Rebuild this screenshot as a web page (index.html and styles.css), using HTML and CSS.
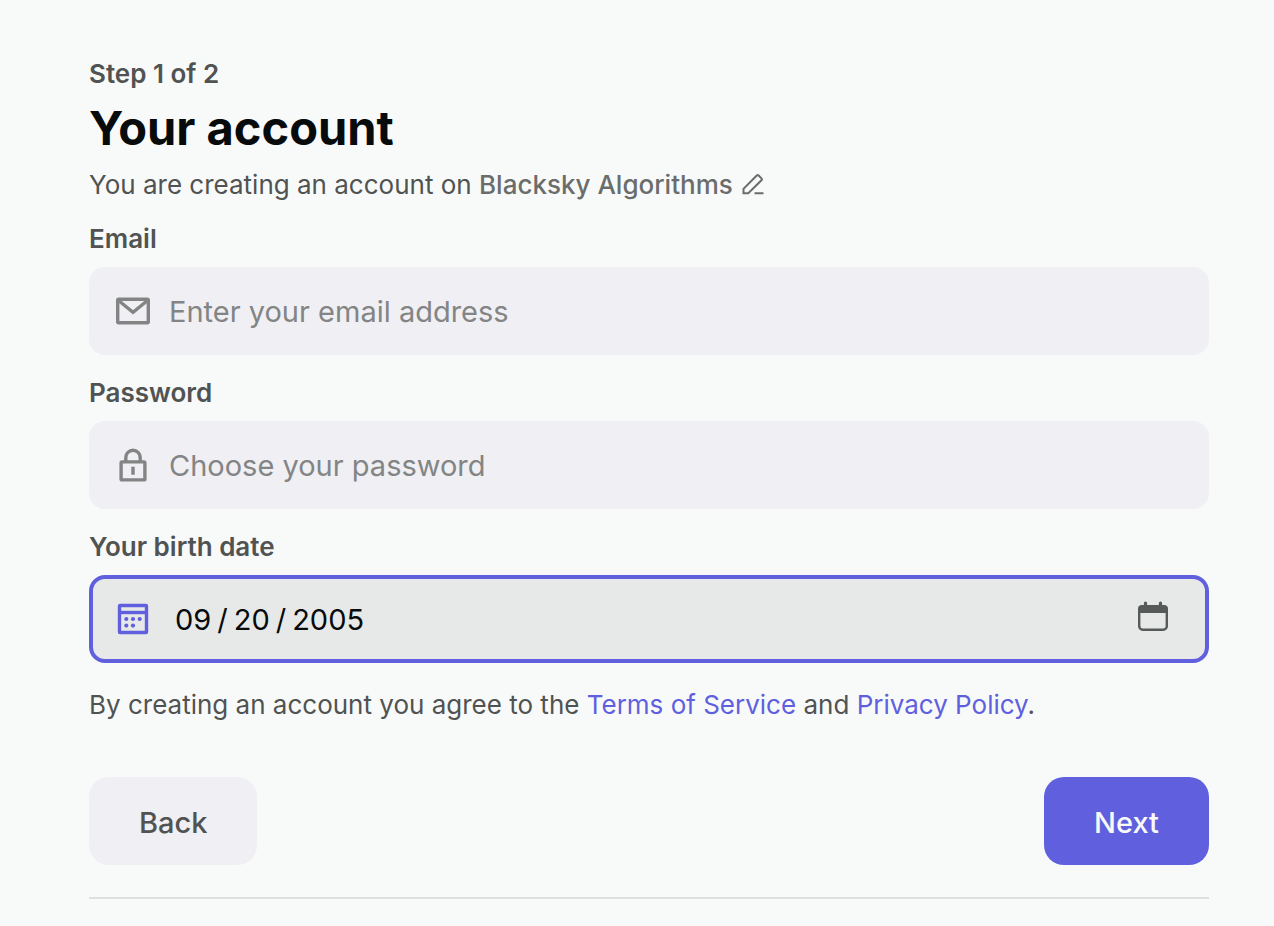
FILE: index.html
```html
<!DOCTYPE html>
<html lang="en">
<head>
    <meta charset="UTF-8">
    <meta name="viewport" content="width=device-width, initial-scale=1.0">
    <title>Your account</title>
    <link rel="stylesheet" href="styles.css">
</head>
<body>
    <main class="signup">
        <header class="signup-header">
            <p class="step">Step 1 of 2</p>
            <h1 class="title">Your account</h1>
            <p class="host">You are creating an account on
                <button type="button" class="host-button">Blacksky Algorithms<svg class="pencil" viewBox="0 0 24 24" aria-hidden="true"><path d="M2.500 20.200v-4.400L16 2.300a1 1 0 0 1 1.400 0l3.300 3.300a1 1 0 0 1 0 1.400L7.300 20.200zM13.500 20.200H22.500"/></svg></button>
            </p>
        </header>

        <form class="signup-form">
            <div class="field">
                <label class="field-label" for="email">Email</label>
                <div class="input-box">
                    <svg class="icon" viewBox="0 0 40 40" aria-hidden="true"><rect x="4.700" y="8.200" width="30.600" height="23.600" rx="1"/><path d="M5.500 9.500 20 21.200 34.500 9.500"/></svg>
                    <input type="email" id="email" placeholder="Enter your email address">
                </div>
            </div>

            <div class="field">
                <label class="field-label" for="password">Password</label>
                <div class="input-box">
                    <svg class="icon" viewBox="0 0 40 40" aria-hidden="true"><rect x="8.100" y="16.900" width="23.800" height="18" rx="1"/><path d="M12.800 16.500v-4a7.200 7.200 0 0 1 14.400 0v4M20 21.800v8"/></svg>
                    <input type="password" id="password" placeholder="Choose your password">
                </div>
            </div>

            <div class="field">
                <label class="field-label" for="birthdate">Your birth date</label>
                <div class="input-box active">
                    <svg class="icon" viewBox="0 0 40 40" aria-hidden="true">
                        <rect x="6.500" y="6.500" width="27" height="27" rx="0.500"/>
                        <path d="M6.500 13.500h27"/>
                        <g class="dots">
                            <circle cx="13.300" cy="20" r="2.100"/>
                            <circle cx="20" cy="20" r="2.100"/>
                            <circle cx="26.700" cy="20" r="2.100"/>
                            <circle cx="13.300" cy="26.600" r="2.100"/>
                            <circle cx="20" cy="26.600" r="2.100"/>
                        </g>
                    </svg>
                    <input type="date" id="birthdate" class="date-input" value="2005-09-20">
                    <svg class="picker-icon" viewBox="0 0 32 32" aria-hidden="true">
                        <rect x="2.200" y="5.500" width="27.600" height="23.300" rx="3.500"/>
                        <path class="picker-fill" d="M1 12V8a4 4 0 0 1 4-4h22a4 4 0 0 1 4 4v4z"/>
                        <path class="picker-rings" d="M8.500 2v4M23.500 2v4"/>
                    </svg>
                </div>
            </div>

            <p class="terms">By creating an account you agree to the <a href="#">Terms of Service</a> and <a href="#">Privacy Policy</a>.</p>

            <div class="actions">
                <button type="button" class="btn btn-back">Back</button>
                <button type="submit" class="btn btn-next">Next</button>
            </div>
        </form>

        <hr class="divider">
    </main>
</body>
</html>
```
FILE: styles.css
```css
body {
    margin: 0;
    background-color: #f8faf9;
    color: #505352;
    font-family: Inter, "Liberation Sans", sans-serif;
    font-size: 26px;
    line-height: 32px;
}

p,
h1 {
    margin: 0;
}

button,
input {
    font-family: inherit;
    border: none;
}

.signup {
    padding: 58px 65px 27px 89px;
}

.signup-header {
    display: flex;
    flex-direction: column;
    gap: 8px;
    margin-bottom: 22px;
}

.step {
    font-weight: 600;
}

.title {
    color: #080b0b;
    font-size: 47px;
    font-weight: 700;
    line-height: 59px;
}

.host {
    margin-top: 4px;
}

.host-button {
    display: inline-flex;
    align-items: center;
    gap: 8px;
    padding: 0;
    background: none;
    color: #6a6d6c;
    font-size: inherit;
    font-weight: 500;
    line-height: inherit;
    cursor: pointer;
}

.pencil {
    width: 24px;
    height: 24px;
    fill: none;
    stroke: currentColor;
    stroke-width: 2;
}

.signup-form {
    display: flex;
    flex-direction: column;
    gap: 22px;
}

.field {
    display: flex;
    flex-direction: column;
    gap: 12px;
}

.field-label {
    font-weight: 600;
}

.input-box {
    position: relative;
    display: flex;
    align-items: center;
    gap: 16px;
    height: 88px;
    padding: 0 24px;
    box-sizing: border-box;
    border-radius: 16px;
    background-color: #f0eff4;
    color: #838584;
}

.input-box input {
    flex: 1;
    min-width: 0;
    height: 100%;
    padding: 0;
    background: none;
    color: #080b0b;
    font-size: 29px;
    outline: none;
}

.input-box input::placeholder {
    color: #838584;
    opacity: 1;
}

.input-box.active {
    padding: 0 20px;
    border: 4px solid #6060df;
    background-color: #e7e9e8;
    color: #6060df;
}

.icon {
    flex: none;
    width: 40px;
    height: 40px;
    fill: none;
    stroke: currentColor;
    stroke-width: 3.4;
}

.dots {
    fill: currentColor;
    stroke: none;
}

.input-box .date-input {
    padding: 0 16px 0 5px;
}

.date-input::-webkit-datetime-edit-text {
    padding: 0 5px;
}

/* native picker button stays clickable under the drawn icon */
.date-input::-webkit-calendar-picker-indicator {
    width: 32px;
    height: 32px;
    padding: 0;
    opacity: 0;
    cursor: pointer;
}

.picker-icon {
    position: absolute;
    top: 22px;
    right: 36px;
    width: 32px;
    height: 32px;
    fill: none;
    stroke: #565a59;
    stroke-width: 2.4;
    pointer-events: none;
}

.picker-fill {
    fill: #565a59;
    stroke: none;
}

.picker-rings {
    stroke-width: 3.2;
    stroke-linecap: round;
}

.terms {
    margin-top: 4px;
}

.terms a {
    color: #6060df;
    text-decoration: none;
}

.actions {
    display: flex;
    justify-content: space-between;
    margin-top: 34px;
}

.btn {
    height: 88px;
    padding: 2px 50px 0;
    border-radius: 20px;
    font-size: 29px;
    font-weight: 500;
    cursor: pointer;
}

.btn-back {
    background-color: #f0eff4;
    color: #505352;
}

.btn-next {
    background-color: #6060df;
    color: #f8faf9;
}

.divider {
    margin: 32px 0 0;
    border: none;
    border-top: 2px solid #dde0df;
}
```
